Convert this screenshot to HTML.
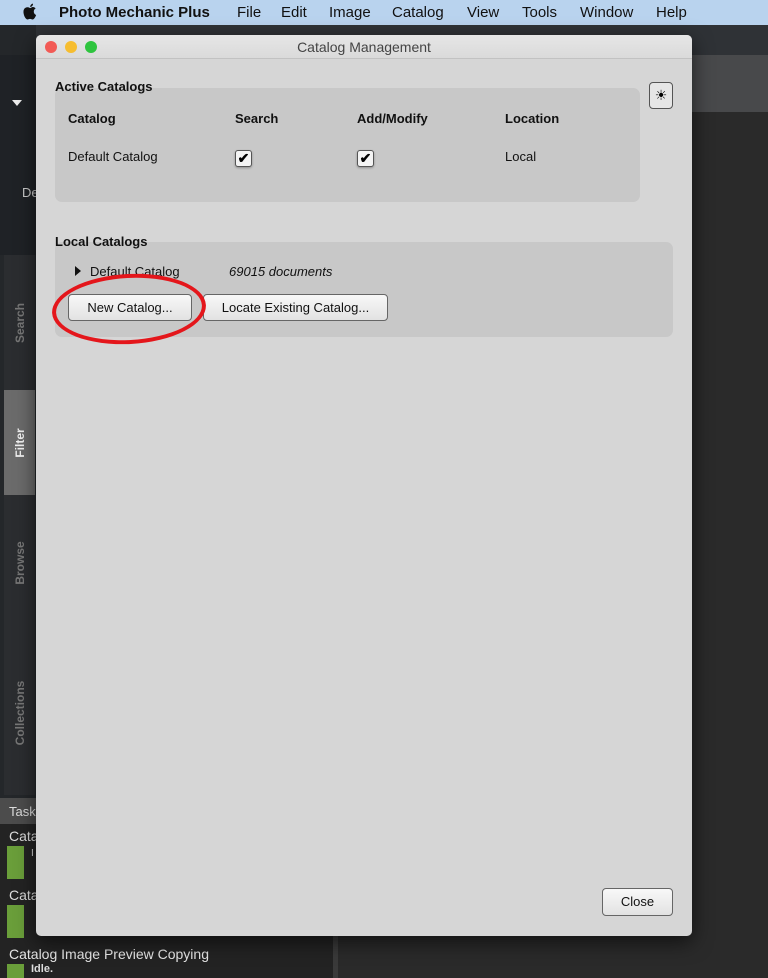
<!DOCTYPE html>
<html><head><style>
*{margin:0;padding:0;box-sizing:border-box}
body{width:768px;height:978px;overflow:hidden;background:#2c2c2c;font-family:"Liberation Sans",sans-serif;position:relative}
.a{position:absolute}
.menu{top:0;left:0;width:768px;height:25px;background:#b9d3ee;font-size:15px;color:#111}
.menu span{position:absolute;top:4px}
.side{left:0;top:25px;width:36px;height:953px;background:#24272a}
.tab{left:4px;width:31px;background:#2b2d30;color:#777;font-weight:bold;font-size:12px}
.tab span{position:absolute;left:50%;top:50%;transform:translate(-50%,-50%) rotate(-90deg);white-space:nowrap}
.dlg{left:36px;top:35px;width:656px;height:901px;background:#d6d6d6;border-radius:5px;box-shadow:0 6px 20px rgba(0,0,0,.6)}
.bold{font-weight:bold;font-size:13px;color:#111;z-index:2}
.t{font-size:13px;color:#111}
.cb{width:17px;height:17px;border:1px solid #555;border-radius:3px;background:#f4f4f4;box-shadow:0 1px 2px rgba(0,0,0,.3);font-size:14px;line-height:15px;text-align:center;font-weight:bold}
.btn{height:27px;border:1px solid #666;border-radius:4px;background:linear-gradient(#f8f8f8,#e2e2e2);font-size:13px;color:#111;text-align:center;line-height:25px}
</style></head><body>
<div class="a menu">
<svg class="a" style="left:22px;top:3px" width="16" height="18" viewBox="0 0 16 18"><path d="M8 5C6 3.5 2 4 1.5 8c-.4 3.5 2 8.5 4 8.5 1 0 1.5-.6 2.5-.6s1.5.6 2.5.6c1.5 0 3-2.5 3.6-4.5-1.6-.7-2.4-2-2.3-3.6 0-1.3.8-2.3 1.8-2.9C12.6 4 11 3.8 10 4.2 9 4.6 8.6 5 8 5z" fill="#111"/><path d="M8.2 4C8 2.5 9.3.8 11 .6c.2 1.6-1.2 3.3-2.8 3.4z" fill="#111"/></svg>
<span style="left:59px;font-weight:bold">Photo Mechanic Plus</span>
<span style="left:237px">File</span><span style="left:281px">Edit</span><span style="left:329px">Image</span>
<span style="left:392px">Catalog</span><span style="left:467px">View</span><span style="left:522px">Tools</span>
<span style="left:580px">Window</span><span style="left:656px">Help</span>
</div>
<div class="a" style="left:0;top:25px;width:768px;height:30px;background:#2f3236"></div>
<div class="a" style="left:0;top:55px;width:768px;height:57px;background:#48494b"></div>
<div class="a" style="left:0;top:112px;width:768px;height:866px;background:#2a2a2a"></div>
<div class="a side"></div>
<div class="a" style="left:0;top:55px;width:36px;height:200px;background:#1f2226"></div>
<div class="a" style="left:12px;top:100px;width:0;height:0;border-left:5px solid transparent;border-right:5px solid transparent;border-top:6px solid #eee"></div>
<div class="a" style="left:22px;top:185px;color:#ccc;font-size:13px">De</div>
<div class="a tab" style="top:255px;height:135px"><span>Search</span></div>
<div class="a tab" style="top:390px;height:105px;background:#6b6b6b;color:#f0f0f0"><span>Filter</span></div>
<div class="a tab" style="top:495px;height:135px"><span>Browse</span></div>
<div class="a tab" style="top:630px;height:165px"><span>Collections</span></div>
<div class="a" style="left:0;top:798px;width:36px;height:26px;background:#4c4c4c"></div>
<div class="a" style="left:9px;top:804px;color:#ddd;font-size:13px">Task</div>
<div class="a" style="left:0;top:824px;width:333px;height:154px;background:#232323"></div>
<div class="a" style="left:333px;top:824px;width:5px;height:154px;background:#3a3a3a"></div>
<div class="a" style="left:9px;top:828px;color:#ddd;font-size:14px">Cata</div>
<div class="a" style="left:7px;top:846px;width:17px;height:33px;background:#6a9e3a"></div>
<div class="a" style="left:31px;top:848px;color:#ddd;font-size:10px">I</div>
<div class="a" style="left:9px;top:887px;color:#ddd;font-size:14px">Cata</div>
<div class="a" style="left:7px;top:905px;width:17px;height:33px;background:#6a9e3a"></div>
<div class="a" style="left:9px;top:946px;color:#e6e6e6;font-size:14px">Catalog Image Preview Copying</div>
<div class="a" style="left:7px;top:964px;width:17px;height:14px;background:#6a9e3a"></div>
<div class="a" style="left:31px;top:963px;color:#ddd;font-size:11px;font-weight:bold">Idle.</div>

<div class="a dlg">
<div class="a" style="left:0;top:0;width:656px;height:24px;border-bottom:1px solid #c2c2c2;border-radius:5px 5px 0 0;background:linear-gradient(#e6e6e6,#dadada)"></div>
<div class="a" style="left:9px;top:6px;width:12px;height:12px;border-radius:50%;background:#f25a55"></div>
<div class="a" style="left:29px;top:6px;width:12px;height:12px;border-radius:50%;background:#f6bd2f"></div>
<div class="a" style="left:49px;top:6px;width:12px;height:12px;border-radius:50%;background:#2ec43e"></div>
<div class="a" style="left:0;top:4px;width:656px;text-align:center;font-size:14px;color:#444">Catalog Management</div>

<div class="a" style="left:19px;top:53px;width:585px;height:114px;background:#c8c8c8;border-radius:7px"></div>
<div class="a bold" style="left:19px;top:44px">Active Catalogs</div>
<div class="a bold" style="left:32px;top:76px">Catalog</div>
<div class="a bold" style="left:199px;top:76px">Search</div>
<div class="a bold" style="left:321px;top:76px">Add/Modify</div>
<div class="a bold" style="left:469px;top:76px">Location</div>
<div class="a t" style="left:32px;top:114px">Default Catalog</div>
<div class="a cb" style="left:199px;top:115px">✔</div>
<div class="a cb" style="left:321px;top:115px">✔</div>
<div class="a t" style="left:469px;top:114px">Local</div>
<div class="a" style="left:613px;top:47px;width:24px;height:27px;border:1px solid #555;border-radius:4px;background:#e6e6e6;text-align:center;line-height:24px;font-size:14px">☀</div>

<div class="a" style="left:19px;top:207px;width:618px;height:95px;background:#c8c8c8;border-radius:7px"></div>
<div class="a bold" style="left:19px;top:199px">Local Catalogs</div>
<div class="a" style="left:39px;top:231px;width:0;height:0;border-top:5px solid transparent;border-bottom:5px solid transparent;border-left:6px solid #111"></div>
<div class="a t" style="left:54px;top:229px">Default Catalog</div>
<div class="a t" style="left:193px;top:229px;font-style:italic">69015 documents</div>
<div class="a btn" style="left:32px;top:259px;width:124px">New Catalog...</div>
<div class="a btn" style="left:167px;top:259px;width:185px">Locate Existing Catalog...</div>
<div class="a" style="left:16px;top:239px;width:154px;height:70px;border:4px solid #e4161b;border-radius:50%;transform:rotate(-3deg)"></div>

<div class="a btn" style="left:566px;top:853px;width:71px;height:28px;line-height:26px">Close</div>
</div>
</body></html>
